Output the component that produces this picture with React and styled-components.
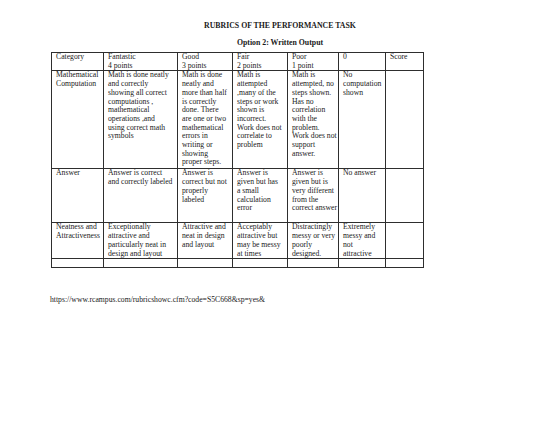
import React from 'react';
import styled, { createGlobalStyle } from 'styled-components';

const GlobalStyle = createGlobalStyle`
  body {
    margin: 0;
    background: #ffffff;
    font-family: "Liberation Serif", "Times New Roman", serif;
    color: #1a1a1a;
  }
`;

const Page = styled.div`
  width: 560px;
  height: 433px;
  background: #fff;
  padding-top: 21px;
  box-sizing: border-box;
`;

const Title = styled.div`
  text-align: center;
  font-weight: bold;
  font-size: 7.8px;
  line-height: 9px;
  margin-bottom: ${p => p.gap || 0}px;
`;

const Table = styled.table`
  margin-left: 51px;
  border-collapse: collapse;
  table-layout: fixed;
  width: 373px;
  font-size: 7.7px;
  line-height: 8.7px;
`;

const Row = styled.tr`
  height: ${p => p.h}px;
`;

const Cell = styled.td`
  box-sizing: border-box;
  border: 1px solid #2e2e2e;
  vertical-align: top;
  padding: 0 1px 0 4px;
  width: ${p => p.w}px;
  white-space: nowrap;
  overflow: hidden;
`;

const Url = styled.div`
  margin: 27px 0 0 50px;
  font-size: 7.7px;
  line-height: 9px;
`;

const widths = [52, 74, 55, 55, 51, 47, 38];

const rows = [
  {
    h: 18,
    cells: [
      ['Category'],
      ['Fantastic', '4 points'],
      ['Good', '3 points'],
      ['Fair', '2 points'],
      ['Poor', '1 point'],
      ['0'],
      ['Score'],
    ],
  },
  {
    h: 98,
    cells: [
      ['Mathematical', 'Computation'],
      ['Math is done neatly', 'and correctly', 'showing all correct', 'computations ,', 'mathematical', 'operations ,and', 'using correct math', 'symbols'],
      ['Math is done', 'neatly and', 'more than half', 'is correctly', 'done. There', 'are one or two', 'mathematical', 'errors in', 'writing or', 'showing', 'proper steps.'],
      ['Math is', 'attempted', ',many of the', 'steps or work', 'shown is', 'incorrect.', 'Work does not', 'correlate to', 'problem'],
      ['Math is', 'attempted, no', 'steps shown.', 'Has no', 'correlation', 'with the', 'problem.', 'Work does not', 'support', 'answer.'],
      ['No', 'computation', 'shown'],
      [],
    ],
  },
  {
    h: 54,
    cells: [
      ['Answer'],
      ['Answer is correct', 'and correctly labeled'],
      ['Answer is', 'correct but not', 'properly', 'labeled'],
      ['Answer is', 'given but has', 'a small', 'calculation', 'error'],
      ['Answer is', 'given but is', 'very different', 'from the', 'correct answer'],
      ['No answer'],
      [],
    ],
  },
  {
    h: 36,
    cells: [
      ['Neatness and', 'Attractiveness'],
      ['Exceptionally', 'attractive and', 'particularly neat in', 'design and layout'],
      ['Attractive and', 'neat in design', 'and layout'],
      ['Acceptably', 'attractive but', 'may be messy', 'at times'],
      ['Distractingly', 'messy or very', 'poorly', 'designed.'],
      ['Extremely', 'messy and', 'not', 'attractive'],
      [],
    ],
  },
  { h: 9, cells: [[], [], [], [], [], [], []] },
];

function Lines({ lines }) {
  return lines.map((l, i) => <div key={i}>{l}</div>);
}

export default function App() {
  return (
    <Page>
      <GlobalStyle />
      <Title gap={8}>RUBRICS OF THE PERFORMANCE TASK</Title>
      <Title gap={5}>Option 2: Written Output</Title>
      <Table>
        <tbody>
          {rows.map((r, i) => (
            <Row key={i} h={r.h}>
              {r.cells.map((c, j) => (
                <Cell key={j} w={widths[j]}>
                  <Lines lines={c} />
                </Cell>
              ))}
            </Row>
          ))}
        </tbody>
      </Table>
      <Url>https://www.rcampus.com/rubricshowc.cfm?code=S5C668&amp;sp=yes&amp;</Url>
    </Page>
  );
}
